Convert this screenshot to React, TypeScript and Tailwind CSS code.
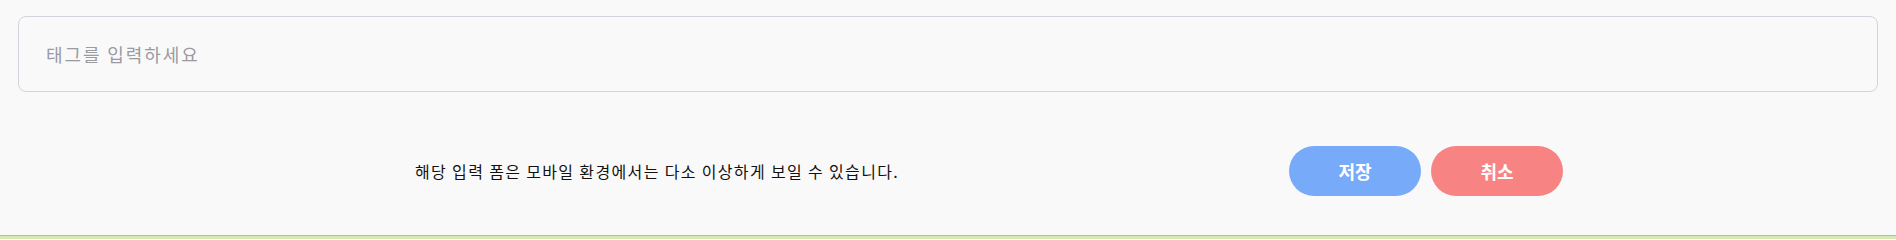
import { useState } from "react"

export default function App() {
  const [tag, setTag] = useState("")

  return (
    <div className="w-full bg-[#f9f9f9] font-['Noto_Sans_CJK_KR','Noto_Sans',sans-serif]">
      <div className="h-[236px] border-b border-[#b3bca7] pt-[16px]">
        {/* tag input */}
        <div className="mx-[18px]">
          <input
            value={tag}
            onChange={(e) => setTag(e.target.value)}
            placeholder="태그를 입력하세요"
            className="block h-[76px] w-full rounded-[8px] border border-[#d2d5dc] bg-[#f9f9fa] pl-[27px] text-[18px] tracking-[1.9px] text-[#333] outline-none placeholder:text-[#9a9aa2]"
          />
        </div>

        {/* notice + actions */}
        <div className="mt-[54px] flex items-center">
          <p className="ml-[415px] text-[16px] tracking-[1.35px] text-[#111]">
            해당 입력 폼은 모바일 환경에서는 다소 이상하게 보일 수 있습니다.
          </p>
          <div className="ml-auto mr-[333px] flex gap-[10px]">
            <button className="h-[50px] w-[132px] rounded-full bg-[#78aafa] text-[18px] font-bold text-white">
              저장
            </button>
            <button className="h-[50px] w-[132px] rounded-full bg-[#f88383] text-[18px] font-bold text-white">
              취소
            </button>
          </div>
        </div>
      </div>
      <div className="h-[3px] bg-[#d6e9b2]" />
    </div>
  )
}
